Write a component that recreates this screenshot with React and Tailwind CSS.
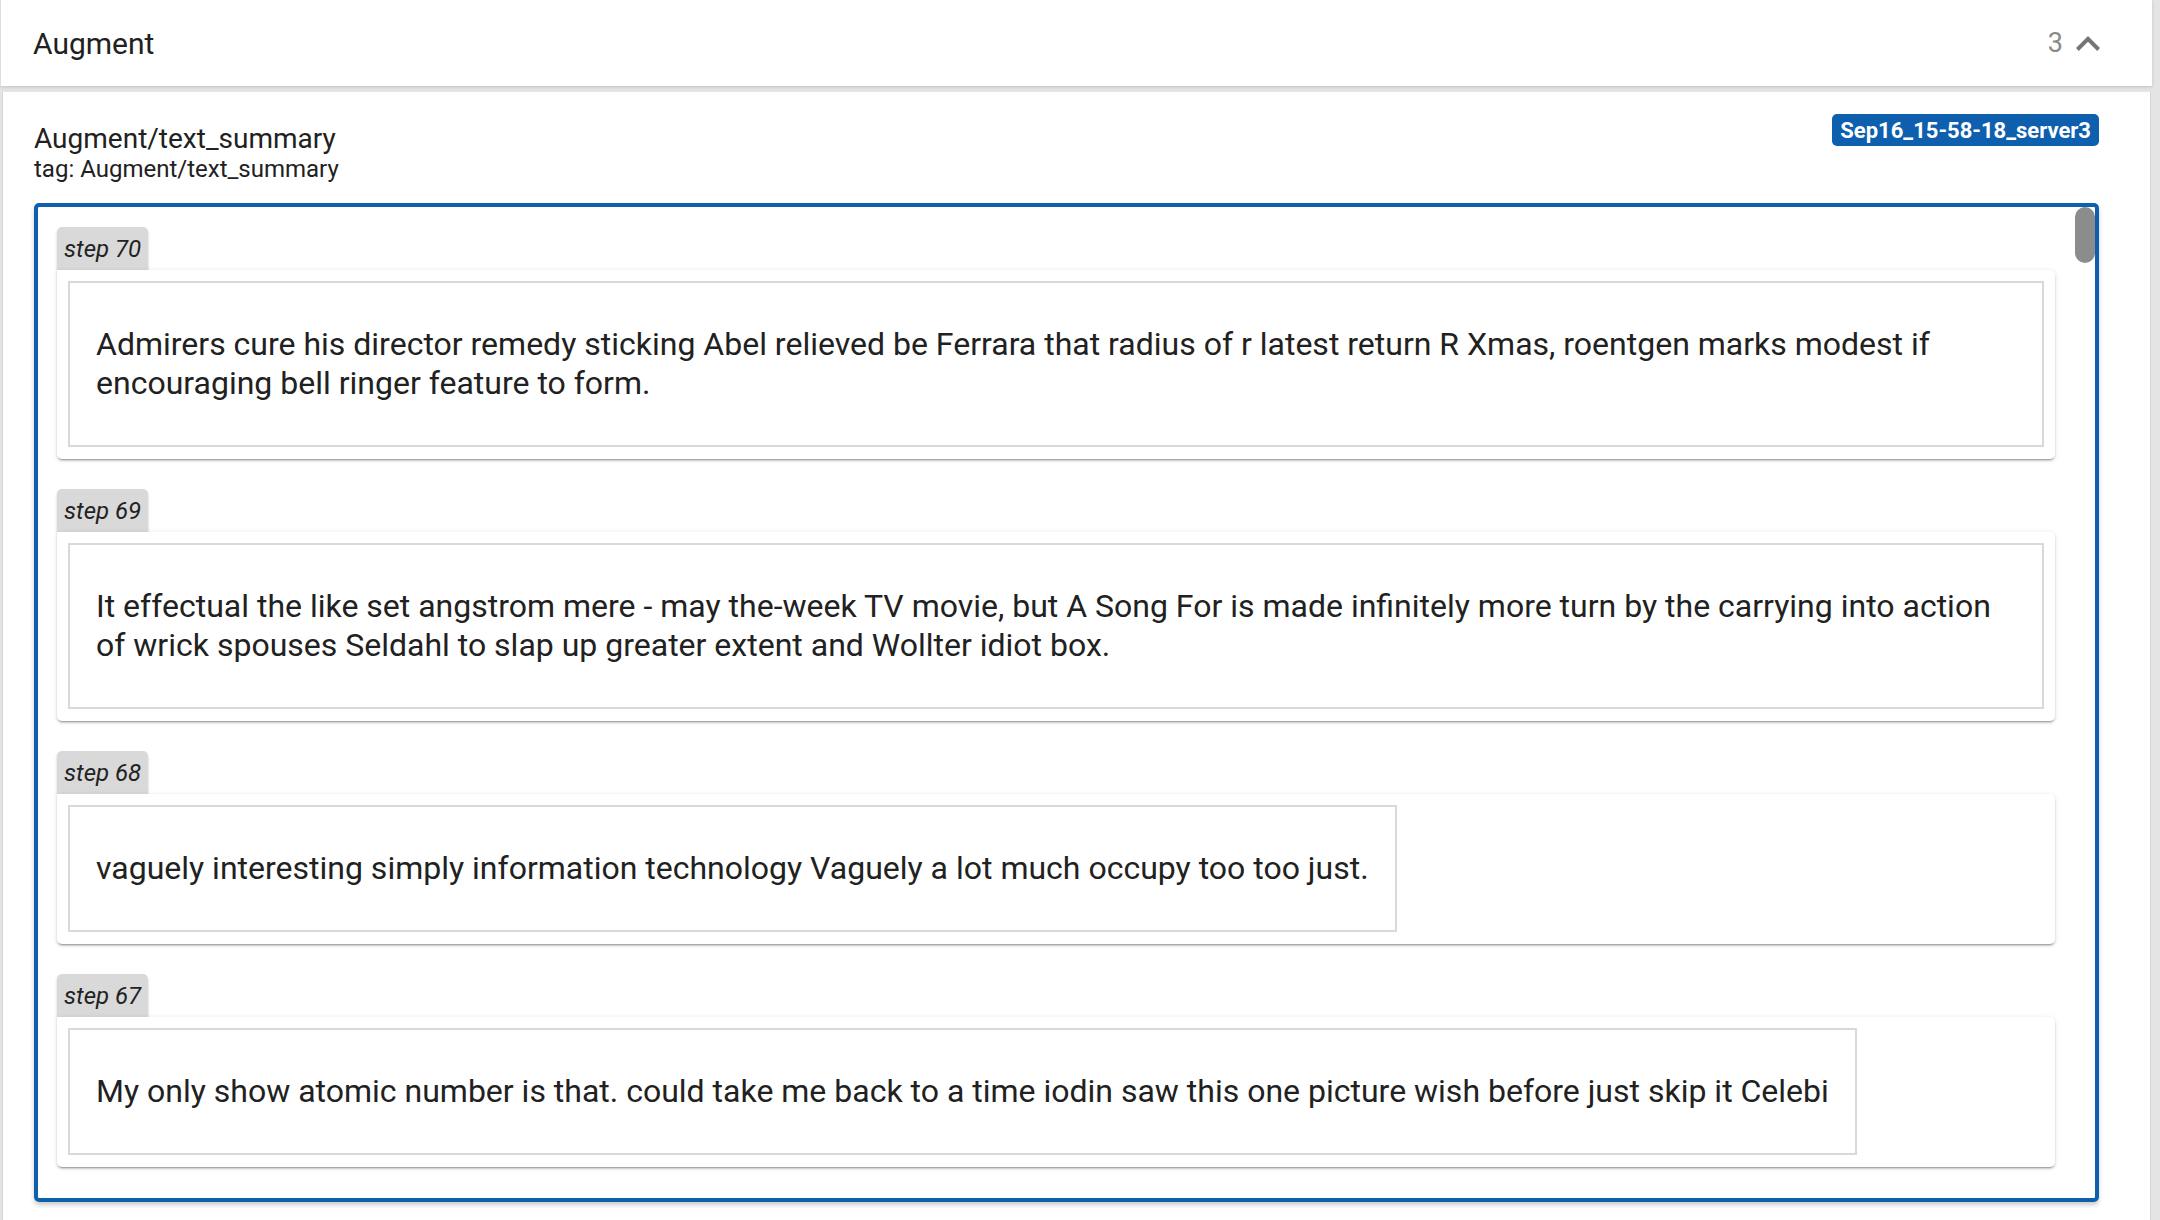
import React from 'react';

const steps = [
  {
    step: 70,
    text: 'Admirers cure his director remedy sticking Abel relieved be Ferrara that radius of r latest return R Xmas, roentgen marks modest if encouraging bell ringer feature to form.',
  },
  {
    step: 69,
    text: 'It effectual the like set angstrom mere - may the-week TV movie, but A Song For is made infinitely more turn by the carrying into action of wrick spouses Seldahl to slap up greater extent and Wollter idiot box.',
  },
  {
    step: 68,
    text: 'vaguely interesting simply information technology Vaguely a lot much occupy too too just.',
  },
  {
    step: 67,
    text: 'My only show atomic number is that. could take me back to a time iodin saw this one picture wish before just skip it Celebi',
  },
];

// one text entry: grey step tab + white paper with the bordered text box
const StepEntry = ({ step, text }) => (
  <div className="flex flex-col items-start">
    <div className="flex h-[43px] items-center rounded-t-[5px] bg-[#d9d9d9] px-[7px] text-[24px] italic text-[#222] shadow-[0_2px_3px_rgba(0,0,0,0.2)]">
      step {step}
    </div>
    <div className="w-full rounded-b-[5px] rounded-tr-[5px] bg-white p-[11px] pb-[12px] shadow-[0_3px_1px_-2px_rgba(0,0,0,0.2),0_2px_2px_0_rgba(0,0,0,0.14),0_1px_5px_0_rgba(0,0,0,0.12)]">
      <div className="inline-block max-w-full border-2 border-[#d9d9d9] px-[26px] py-[42px] text-[32px] leading-[39px] text-[#212121]">
        {text}
      </div>
    </div>
  </div>
);

export default function App() {
  return (
    <div className="h-[1220px] w-[2160px] overflow-hidden bg-[#e4e4e4] font-['Roboto','Liberation_Sans',sans-serif] text-[#212121]">
      {/* collapsible group header */}
      <div className="mr-[8px] flex h-[86px] items-center justify-between border-l border-[#ddd] bg-white pl-[32px] pr-[52px] shadow-[0_1px_3px_rgba(0,0,0,0.15)]">
        <span className="text-[30px]">Augment</span>
        <div className="flex items-center gap-[13px]">
          <span className="text-[27px] text-[#8a8a8a]">3</span>
          <svg width="24" height="15" viewBox="6 8 12 7.41" fill="#757575">
            <path d="M12 8l-6 6 1.41 1.41L12 10.83l4.59 4.58L18 14z" />
          </svg>
        </div>
      </div>

      {/* text summary card */}
      <div className="ml-[2px] mr-[9px] mt-[6px] h-[1140px] border-x border-[#d6d6d6] bg-white pl-[31px] pr-[51px] pt-[22px]">
        <div className="flex items-start justify-between">
          <div className="mt-[10px] flex flex-col">
            <span className="text-[28px] leading-[30px]">Augment/text_summary</span>
            <span className="mt-[3px] text-[24px] leading-[24px]">tag: Augment/text_summary</span>
          </div>
          <span className="flex h-[32px] items-center rounded-[5px] bg-[#0e5fae] px-[8px] text-[22px] font-bold text-white">
            Sep16_15-58-18_server3
          </span>
        </div>

        <div className="relative mt-[22px] h-[999px] overflow-hidden rounded-[5px] border-4 border-[#0e5fae] shadow-[0_3px_4px_rgba(0,0,0,0.2)]">
          <div className="flex flex-col gap-[30px] pl-[19px] pr-[40px] pt-[20px]">
            {steps.map((s) => (
              <StepEntry key={s.step} step={s.step} text={s.text} />
            ))}
          </div>
          {/* scrollbar thumb */}
          <div className="absolute right-0 top-0 h-[56px] w-[20px] rounded-full bg-[#8c8c8c]" />
        </div>
      </div>
    </div>
  );
}
